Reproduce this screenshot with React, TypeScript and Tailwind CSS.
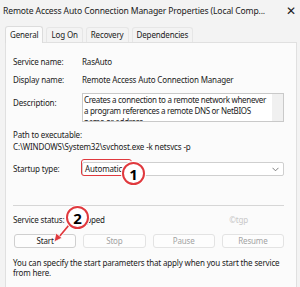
import React from "react";

const font = { fontFamily: '"Noto Sans", "Open Sans", sans-serif' };

function Row({ label, children }: { label: string; children: React.ReactNode }) {
  return (
    <div className="flex h-[12px] items-center">
      <div className="w-[69px] shrink-0">{label}</div>
      <div>{children}</div>
    </div>
  );
}

function Btn({ label, enabled }: { label: string; enabled?: boolean }) {
  return (
    <div
      className={
        "flex h-[14px] items-center justify-center rounded-[3px] border bg-[#fdfdfd] " +
        (enabled ? "border-[#cfcfcf] text-[#1a1a1a]" : "border-[#e3e3e3] text-[#a3a3a3]")
      }
    >
      {label}
    </div>
  );
}

function Badge({ n }: { n: string }) {
  return (
    <div className="flex h-[23px] w-[23px] items-center justify-center rounded-full border-[2px] border-[#e0393e] bg-white text-[15px] font-bold text-black shadow-[0_0_0_1px_#ffffff]">
      {n}
    </div>
  );
}

export default function App() {
  return (
    <div
      className="relative h-[287px] w-[300px] overflow-hidden bg-[#f3f3f3] text-[8px] leading-[12px] tracking-[-0.15px] text-[#1a1a1a]"
      style={font}
    >
      {/* title bar */}
      <div className="flex h-[22px] items-center justify-between pl-[3px] pr-[4px] text-[8.6px] whitespace-nowrap">
        <span>Remote Access Auto Connection Manager Properties (Local Comp...</span>
        <span className="text-[12px] leading-none">✕</span>
      </div>

      {/* tabs */}
      <div className="flex h-[20px] items-end gap-[3px] px-[5px]">
        <div className="relative z-10 -mb-[1px] flex h-[17px] items-center rounded-t-[3px] border border-b-0 border-[#dcdcdc] bg-[#fbfbfb] px-[4px]">
          General
        </div>
        <div className="flex h-[15px] items-center rounded-t-[3px] border border-b-0 border-[#e6e6e6] px-[4px]">Log On</div>
        <div className="flex h-[15px] items-center rounded-t-[3px] border border-b-0 border-[#e6e6e6] px-[4px]">Recovery</div>
        <div className="flex h-[15px] items-center rounded-t-[3px] border border-b-0 border-[#e6e6e6] px-[4px]">Dependencies</div>
      </div>

      {/* panel */}
      <div className="mx-[5px] mr-[3px] h-[260px] border border-[#e0e0e0] bg-[#fbfbfb] pl-[7px] pr-[12px] pt-[13px]">
        <Row label="Service name:">RasAuto</Row>
        <div className="h-[6px]" />
        <Row label="Display name:">Remote Access Auto Connection Manager</Row>

        <div className="mt-[7px] flex">
          <div className="w-[69px] shrink-0 pt-[4px]">Description:</div>
          <div className="flex h-[29px] flex-1 overflow-hidden border border-[#c9c9c9] bg-white">
            <div className="flex-1 whitespace-nowrap pl-[1px] leading-[11px] tracking-[-0.3px]">
              Creates a connection to a remote network whenever
              <br />
              a program references a remote DNS or NetBIOS
              <br />
              name or address.
            </div>
            <div className="w-[11px] shrink-0 bg-[#f0f0f0]" />
          </div>
        </div>

        <div className="mt-[7px]">Path to executable:</div>
        <div>C:\WINDOWS\System32\svchost.exe -k netsvcs -p</div>

        <div className="mt-[9px] flex items-center">
          <div className="w-[69px] shrink-0">Startup type:</div>
          <div className="flex h-[14px] flex-1 items-center justify-between rounded-[2px] border border-[#cfcfcf] bg-white pl-[2px] pr-[4px]">
            <span>Automatic</span>
            <svg width="7" height="5" viewBox="0 0 7 5">
              <path d="M0.5 0.8 L3.5 3.8 L6.5 0.8" fill="none" stroke="#707070" strokeWidth="0.9" />
            </svg>
          </div>
        </div>

        <div className="mt-[29px] h-px bg-[#d6d6d6]" />

        <div className="mt-[8px] flex h-[12px] items-center">
          <span>Service status:</span>
          <span className="ml-[10px]">Stopped</span>
          <span className="ml-auto mr-[36px] text-[#c8c8c8]">©tgp</span>
        </div>

        <div className="mt-[8px] grid grid-cols-4 gap-[7px] pl-px">
          <Btn label="Start" enabled />
          <Btn label="Stop" />
          <Btn label="Pause" />
          <Btn label="Resume" />
        </div>

        <div className="mt-[10px] whitespace-nowrap leading-[10px]">
          You can specify the start parameters that apply when you start the service
          <br />
          from here.
        </div>
      </div>

      {/* annotations */}
      <div className="absolute left-[81px] top-[159px] h-[17px] w-[51px] rounded-[3px] border-[1.5px] border-[#e0393e]" />
      <div className="absolute left-[122px] top-[162px]">
        <Badge n="1" />
      </div>
      <svg className="absolute left-0 top-0" width="300" height="287" viewBox="0 0 300 287">
        <g stroke="#ffffff" strokeWidth="3.5" fill="none" strokeLinecap="round">
          <path d="M69 225 L58 238" />
        </g>
        <path d="M69 225 L59 237" stroke="#e0393e" strokeWidth="1.8" fill="none" />
        <path d="M54 242 L56 233 L62 238 Z" fill="#e0393e" stroke="#ffffff" strokeWidth="0.8" />
      </svg>
      <div className="absolute left-[66px] top-[206px]">
        <Badge n="2" />
      </div>
    </div>
  );
}
